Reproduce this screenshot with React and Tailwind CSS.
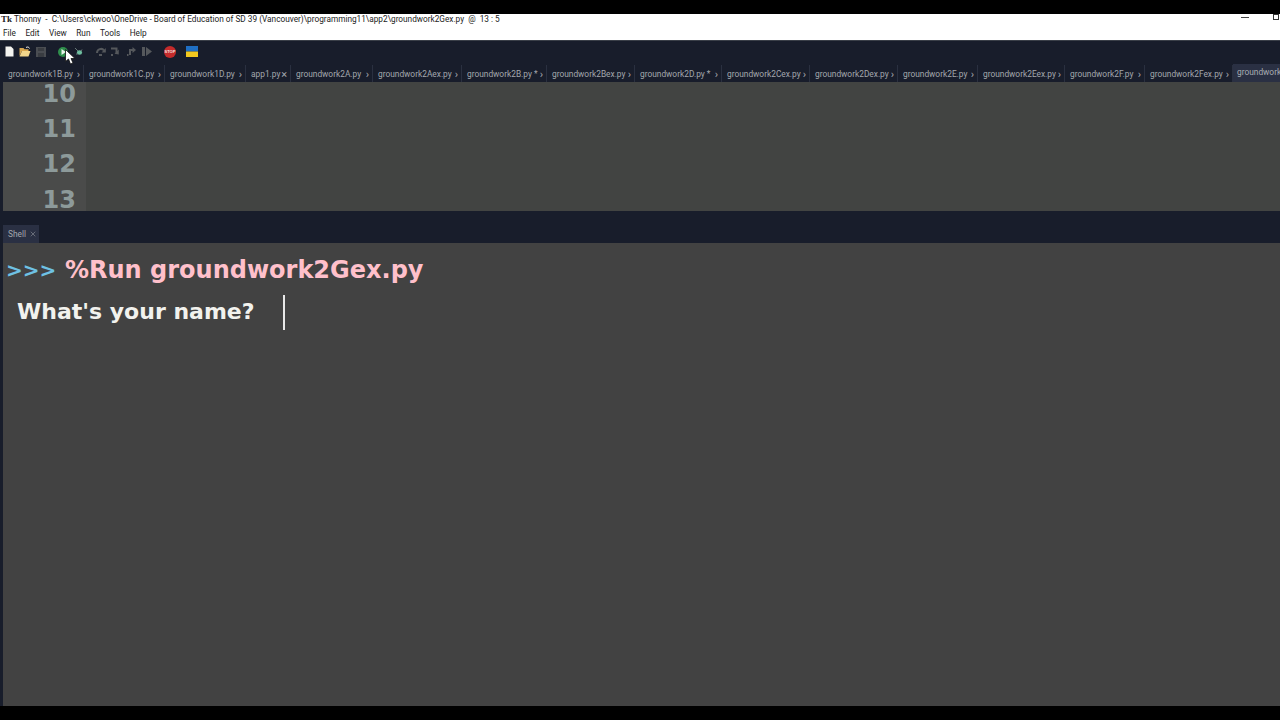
import React from "react";
import { X } from "lucide-react";

const uiFont = "font-['Roboto','Noto_Sans',sans-serif]";

const tabs = [
  { name: "groundwork1B.py", mark: "›", w: "w-[81px]" },
  { name: "groundwork1C.py", mark: "›", w: "w-[81px]" },
  { name: "groundwork1D.py", mark: "›", w: "w-[81px]" },
  { name: "app1.py", mark: "×", w: "w-[45px]" },
  { name: "groundwork2A.py", mark: "›", w: "w-[82px]" },
  { name: "groundwork2Aex.py", mark: "›", w: "w-[89px]" },
  { name: "groundwork2B.py *", mark: "›", w: "w-[85px]" },
  { name: "groundwork2Bex.py", mark: "›", w: "w-[88px]" },
  { name: "groundwork2D.py *", mark: "›", w: "w-[87px]" },
  { name: "groundwork2Cex.py", mark: "›", w: "w-[88px]" },
  { name: "groundwork2Dex.py", mark: "›", w: "w-[88px]" },
  { name: "groundwork2E.py", mark: "›", w: "w-[80px]" },
  { name: "groundwork2Eex.py", mark: "›", w: "w-[87px]" },
  { name: "groundwork2F.py", mark: "›", w: "w-[80px]" },
  { name: "groundwork2Fex.py", mark: "›", w: "w-[88px]" },
];

function Toolbar() {
  return (
    <div className="h-[25px] bg-[#181d2b] border-t border-[#3a3f48] flex items-center pl-[5px] pb-[3px]">
      {/* new */}
      <svg width="9" height="11" viewBox="0 0 9 11" className="mr-[5px]">
        <path d="M0.5 0.5H6L8.5 3V10.5H0.5Z" fill="#f4f4f0" />
      </svg>
      {/* open */}
      <svg width="12" height="11" viewBox="0 0 12 11" className="mr-[5px]">
        <path d="M0.5 2H4.5L5.5 3.2H9.5V5H3L0.5 10Z" fill="#d9a850" />
        <path d="M3 5H11.5L9.5 10.5H0.5Z" fill="#f2d68c" />
        <path d="M7 1.5C8.5 0.5 10 1 10.5 2.5" stroke="#e6e6e6" fill="none" />
      </svg>
      {/* save, disabled */}
      <svg width="10" height="10" viewBox="0 0 10 10" className="mr-[12px]">
        <rect width="10" height="10" fill="#4a4d52" />
        <rect x="2" y="1" width="6" height="3" fill="#393c41" />
        <rect x="2" y="6" width="6" height="4" fill="#393c41" />
      </svg>
      {/* run */}
      <svg width="10" height="10" viewBox="0 0 10 10" className="mr-[6px]">
        <circle cx="5" cy="5" r="5" fill="#2f8f4c" />
        <path d="M3.5 2L8 5L3.5 8Z" fill="#e9f3ea" />
      </svg>
      {/* debug */}
      <svg width="10" height="10" viewBox="0 0 10 10" className="mr-[12px]">
        <ellipse cx="5.5" cy="5.5" rx="2.6" ry="2.2" fill="#6fbfa0" />
        <path d="M1 1L4 4M2 7H3.5M8 2.5L7 4" stroke="#7d8f8c" strokeWidth="0.8" />
      </svg>
      {/* step over */}
      <svg width="10" height="9" viewBox="0 0 10 9" className="mr-[5px]">
        <path d="M1 6C1 2 6 0.5 8 3.5" stroke="#55585c" strokeWidth="2" fill="none" />
        <path d="M9.8 1V5.5H5.5Z" fill="#55585c" />
        <rect x="3" y="7" width="3" height="2" fill="#55585c" />
      </svg>
      {/* step into */}
      <svg width="10" height="9" viewBox="0 0 10 9" className="mr-[6px]">
        <path d="M0 1.5H5.5V6" stroke="#55585c" strokeWidth="2" fill="none" />
        <path d="M3 4.5H9L5.5 8Z" fill="#55585c" transform="rotate(-45 6 5)" />
        <rect x="0" y="7" width="2" height="2" fill="#55585c" />
      </svg>
      {/* step out */}
      <svg width="9" height="9" viewBox="0 0 9 9" className="mr-[6px]">
        <path d="M3 8V3H6" stroke="#55585c" strokeWidth="2" fill="none" />
        <path d="M5.5 0L9 3L5.5 6Z" fill="#55585c" />
        <rect x="0" y="7" width="1.5" height="2" fill="#55585c" />
      </svg>
      {/* resume */}
      <svg width="10" height="9" viewBox="0 0 10 9" className="mr-[12px]">
        <rect width="3" height="9" fill="#55585c" />
        <path d="M4 0L10 4.5L4 9Z" fill="#55585c" />
      </svg>
      {/* stop */}
      <svg width="12" height="12" viewBox="0 0 12 12" className="mr-[10px]">
        <circle cx="6" cy="6" r="6" fill="#c42b2b" />
        <text x="6" y="7.4" textAnchor="middle" fontSize="4" fontWeight="700" fontFamily="Liberation Sans, sans-serif" fill="#f5e4e4">STOP</text>
      </svg>
      {/* flag */}
      <svg width="12" height="11" viewBox="0 0 12 11">
        <rect width="12" height="5.5" fill="#1f6fc4" />
        <rect y="5.5" width="12" height="5.5" fill="#f2c81e" />
      </svg>
    </div>
  );
}

function TabBar() {
  return (
    <div className={`h-[17px] bg-[#181d2b] flex pl-[3px] relative ${uiFont} text-[8.35px] text-[#a4a8ad]`}>
      {tabs.map((t) => (
        <div
          key={t.name}
          className={`${t.w} shrink-0 h-full border-r border-[#2a3040] flex items-center justify-between pl-[5px] pr-[3px] pt-[1px] whitespace-nowrap overflow-hidden`}
        >
          <span>{t.name}</span>
          <span className="text-[11px] leading-none">{t.mark}</span>
        </div>
      ))}
      <div className="absolute left-[1233px] top-[-1px] w-[47px] h-[18px] bg-[#2a3043] pl-[4px] pt-[2px] overflow-hidden whitespace-nowrap text-[#a9adb3]">
        groundwork2Gex.py
      </div>
    </div>
  );
}

export default function App() {
  return (
    <div className="w-[1280px] h-[720px] bg-black flex flex-col overflow-hidden">
      <div className="h-[14px] shrink-0" />

      {/* title + menu */}
      <div className={`h-[26px] shrink-0 bg-white text-[#222] ${uiFont} text-[8.26px]`}>
        <div className="h-[13px] flex items-center relative pl-[1px] pb-[2px]">
          <span className="w-[13px] text-[9px] font-bold font-['Liberation_Serif',serif] leading-none">Tk</span>
          <span className="whitespace-pre">Thonny  -  C:\Users\ckwoo\OneDrive - Board of Education of SD 39 (Vancouver)\programming11\app2\groundwork2Gex.py  @  13 : 5</span>
          <div className="absolute left-[1241px] top-[3px] w-[8px] h-px bg-[#444]" />
          <div className="absolute left-[1273px] top-0 w-[6px] h-[6px] border border-[#333]" />
        </div>
        <div className="h-[13px] flex items-center pl-[3px] gap-[9.5px]">
          <span>File</span>
          <span>Edit</span>
          <span>View</span>
          <span>Run</span>
          <span>Tools</span>
          <span>Help</span>
        </div>
      </div>

      <div className="shrink-0 relative">
        <Toolbar />
        {/* mouse pointer */}
        <svg width="11" height="16" viewBox="0 0 11 16" className="absolute left-[65px] top-[9px]">
          <path d="M0.5 0.5V12.5L3.5 10L5.5 15L8 14L6 9.5H10Z" fill="#fff" stroke="#111" strokeWidth="0.8" />
        </svg>
      </div>
      <div className="shrink-0"><TabBar /></div>

      {/* editor */}
      <div className="h-[129px] shrink-0 bg-[#181d2b] pl-[3px]">
        <div className="h-full bg-[#424442] flex overflow-hidden">
          <div className="w-[83px] bg-[#4a4b4a] flex flex-col items-end pr-[10px] -mt-[5px] font-['DejaVu_Sans',sans-serif] font-bold text-[24px] leading-[35.2px] text-[#8d9a9a]">
            <div>10</div>
            <div>11</div>
            <div>12</div>
            <div>13</div>
          </div>
        </div>
      </div>

      {/* shell tab strip */}
      <div className={`h-[32px] shrink-0 bg-[#181d2b] flex items-end pl-[3px] ${uiFont} text-[8.35px] text-[#a4a8ad]`}>
        <div className="h-[18px] w-[36px] bg-[#2a3043] flex items-center pl-[5px] gap-[3px]">
          <span>Shell</span>
          <X size={8} strokeWidth={1.5} />
        </div>
      </div>

      {/* shell */}
      <div className="h-[463px] shrink-0 bg-[#181d2b] pl-[3px]">
        <div className="h-full bg-[#424242] font-['DejaVu_Sans',sans-serif] font-bold text-[24px] leading-[42px]">
          <div className="pt-[6px] pl-[3px] flex whitespace-pre">
            <span className="text-[#6ec1e4] text-[20px] w-[59px]">&gt;&gt;&gt;</span>
            <span className="text-[#ffc0cb]">%Run groundwork2Gex.py</span>
          </div>
          <div className="pl-[14px] flex items-center text-[22px] text-[#f2f2ee] whitespace-pre">
            <span>What's your name?</span>
            <span className="ml-[28.5px] w-[1.5px] h-[35px] bg-[#e8e8e8]" />
          </div>
        </div>
      </div>

      <div className="flex-1" />
    </div>
  );
}
